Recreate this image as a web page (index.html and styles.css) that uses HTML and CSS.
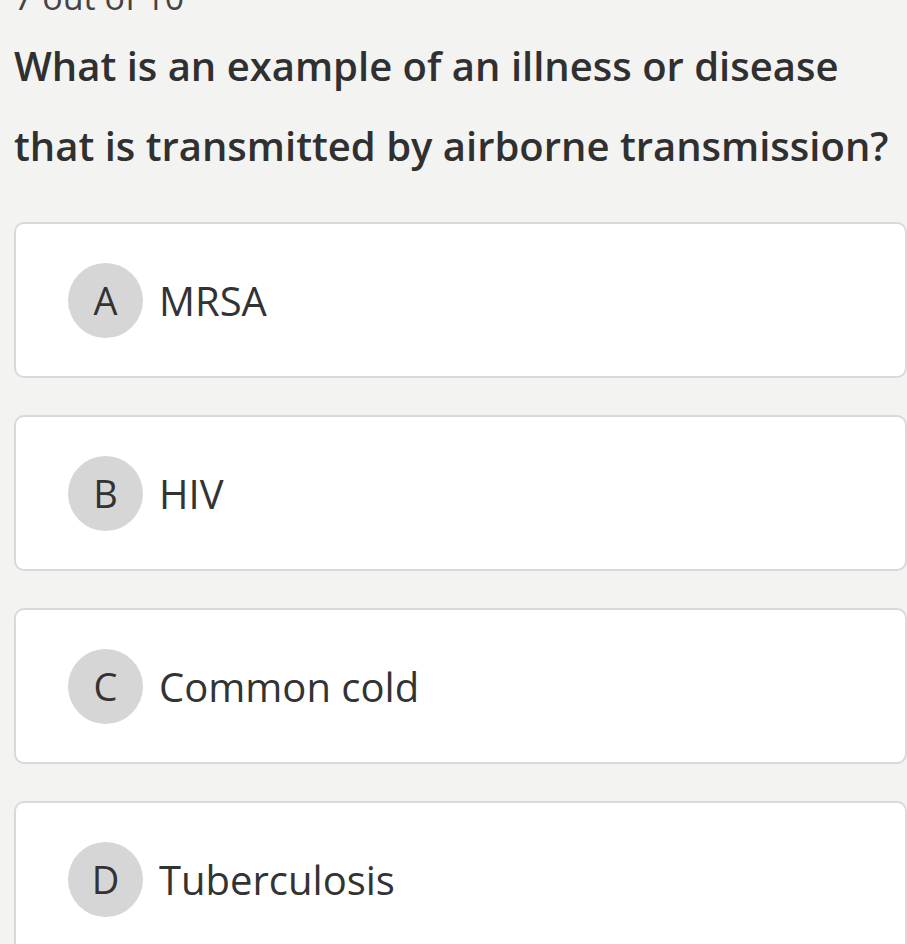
FILE: index.html
```html
<!DOCTYPE html>
<html lang="en">
<head>
<meta charset="utf-8">
<title>Quiz</title>
<link rel="stylesheet" href="styles.css">
</head>
<body>
<main class="quiz">
  <p class="progress">7 out of 10</p>
  <h1 class="question">What is an example of an illness or disease that is transmitted by airborne transmission?</h1>
  <ul class="options">
    <li class="option"><span class="badge">A</span><span class="label">MRSA</span></li>
    <li class="option"><span class="badge">B</span><span class="label">HIV</span></li>
    <li class="option"><span class="badge">C</span><span class="label">Common cold</span></li>
    <li class="option"><span class="badge">D</span><span class="label">Tuberculosis</span></li>
  </ul>
</main>
</body>
</html>
```

FILE: styles.css
```css
html, body {
  margin: 0;
  padding: 0;
  background: #f3f3f2;
  overflow: hidden;
}
body {
  font-family: "Open Sans", "Noto Sans", sans-serif;
  color: #333333;
}
.quiz {
  padding-left: 14px;
}
.progress {
  margin: -23px 0 0 0;
  font-size: 34px;
  line-height: 40px;
  color: #444444;
}
.question {
  margin: 9px 0 0 0;
  font-size: 40px;
  line-height: 80px;
  font-weight: 600;
  color: #303030;
}
.options {
  list-style: none;
  margin: 36px 0 0 0;
  padding: 0;
  display: flex;
  flex-direction: column;
  gap: 37px;
}
.option {
  box-sizing: border-box;
  height: 156px;
  background: #ffffff;
  border: 2px solid #d9d9d9;
  border-radius: 10px;
  padding: 0 0 0 52px;
  display: flex;
  align-items: center;
  gap: 16px;
}
.badge {
  flex: none;
  width: 75px;
  height: 75px;
  border-radius: 50%;
  background: #d6d6d6;
  display: flex;
  align-items: center;
  justify-content: center;
  font-size: 38px;
  color: #333333;
}
.label {
  font-size: 40px;
  color: #333333;
}
```
